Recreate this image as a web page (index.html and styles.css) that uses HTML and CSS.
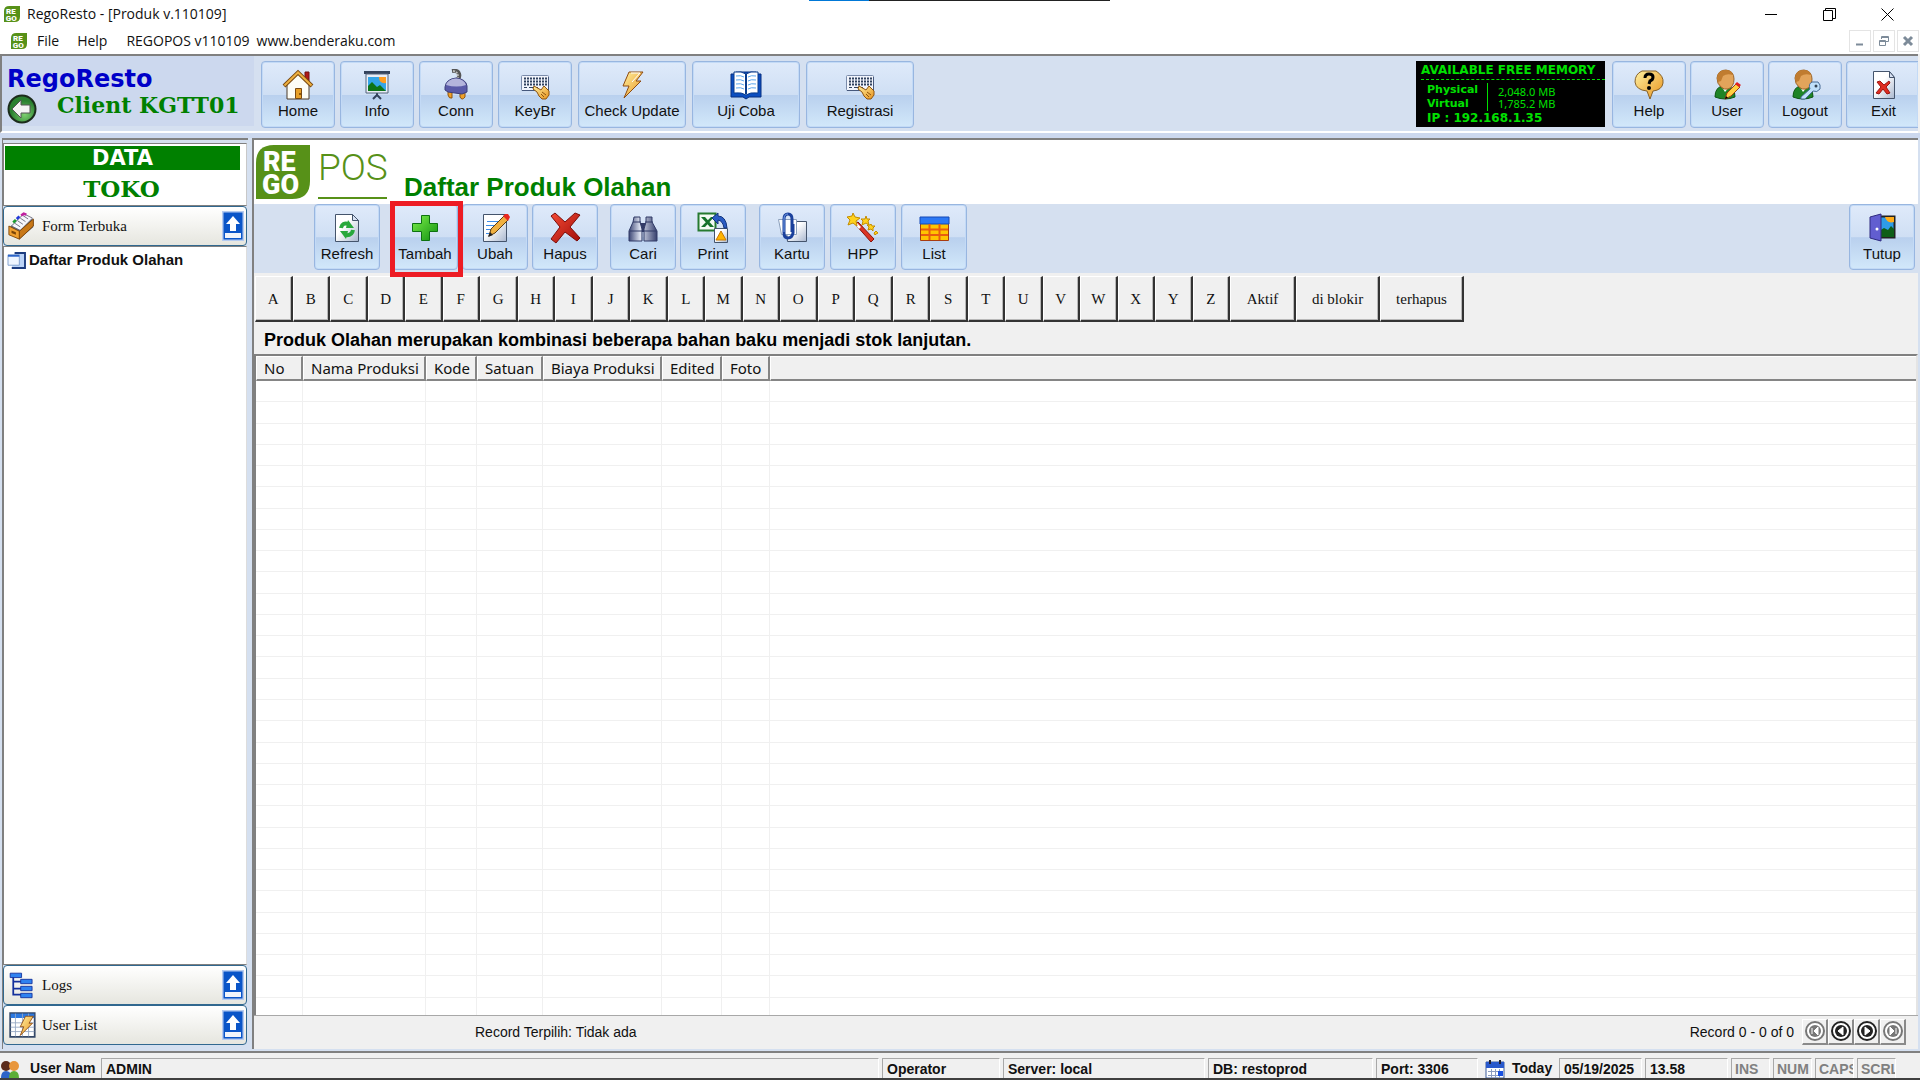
FILE: index.html
```html
<!DOCTYPE html>
<html lang="id">
<head>
<meta charset="utf-8">
<title>RegoResto - [Produk v.110109]</title>
<link rel="stylesheet" href="styles.css">
</head>
<body>
<svg class="defs" aria-hidden="true">
  <defs>
    <linearGradient id="gold" x1="0" y1="0" x2="1" y2="1"><stop offset="0" stop-color="#fff0a0"/><stop offset="1" stop-color="#e8921c"/></linearGradient>
    <linearGradient id="page" x1="0" y1="0" x2="1" y2="1"><stop offset="0.4" stop-color="#fff"/><stop offset="1" stop-color="#a9b7cf"/></linearGradient>
    <linearGradient id="steel" x1="0" x2="1"><stop offset="0" stop-color="#3c4674"/><stop offset="0.4" stop-color="#dfe4f2"/><stop offset="1" stop-color="#36406e"/></linearGradient>
    <linearGradient id="green" x1="0" y1="0" x2="1" y2="1"><stop offset="0" stop-color="#7df04a"/><stop offset="1" stop-color="#109010"/></linearGradient>
    <linearGradient id="red" x1="0" y1="0" x2="1" y2="1"><stop offset="0" stop-color="#f44a34"/><stop offset="1" stop-color="#a00c08"/></linearGradient>
    <radialGradient id="ball" cx="0.6" cy="0.7"><stop offset="0" stop-color="#7ed070"/><stop offset="1" stop-color="#2a8030"/></radialGradient>
    <symbol id="keyboard" viewBox="0 0 32 32">
      <rect x="2.500" y="6.500" width="27" height="15" rx="1" fill="#f2f5fc" stroke="#7b8cab"/>
      <path d="M3 21.500h26M29.500 8v13" stroke="#46587c"/>
      <path d="M5 9.500h23M5 12.500h23M5 15.500h23" stroke="#30425e" stroke-width="2" stroke-dasharray="2 1"/>
      <path d="M5 18.500h3M10 18.500h9" stroke="#30425e"/>
      <path d="M15 17l7 4 3-4 5 5v4l-3 4h-4l-3-3-2-4-4-3z" fill="url(#gold)" stroke="#8e5510"/>
      <path d="M23 23l4 3M22 25l3 3" stroke="#8e5510"/>
    </symbol>
    <symbol id="person" viewBox="0 0 32 32">
      <path d="M4 28q0-10 8-11h4q8 1 8 11-10 4-20 0z" fill="#1e8426" stroke="#0e5614"/>
      <path d="M11 18l3 5 4-5z" fill="#fff"/>
      <path d="M6 9q1-8 9-8 8 1 8 9 0 8-6 10-4 1-7-2-4-3-4-9z" fill="#e2a45b" stroke="#9a6428"/>
      <path d="M6 10q0-9 9-9 6 0 7 5-6-2-10 1l-2 5-3 1z" fill="#c07c30"/>
    </symbol>
    <symbol id="rego" viewBox="0 0 54 54">
      <path d="M0 54V18Q0 0 18 0H54V36Q54 54 36 54Z" fill="#579118"/>
      <text x="7" y="26" class="rego-text">RE</text>
      <text x="6" y="49" class="rego-text">GO</text>
    </symbol>
    <symbol id="upload" viewBox="0 0 22 30">
      <rect x="0.500" y="0.500" width="21" height="29" fill="#0a55c8" stroke="#b5cbf0" stroke-width="2"/>
      <path d="M11 5l7 8h-4v7H8v-7H4z" fill="#fff"/><rect x="3" y="22" width="16" height="5" fill="#f0f4fb"/>
    </symbol>
  </defs>
</svg>

<header class="titlebar">
  <svg class="app-icon"><use href="#rego"/></svg>
  <h1 class="window-title">RegoResto - [Produk v.110109]</h1>
  <div class="progress"><span class="progress-done"></span></div>
  <div class="window-buttons">
    <button aria-label="Minimize"><svg viewBox="0 0 13 13"><path d="M0 6.500h12"/></svg></button>
    <button aria-label="Restore"><svg viewBox="0 0 13 13"><path d="M0.500 2.500h9v10h-9zM2.500 2.500v-2h10v10h-3"/></svg></button>
    <button aria-label="Close"><svg viewBox="0 0 13 13"><path d="M0.500 0.500l12 12M12.500 0.500l-12 12"/></svg></button>
  </div>
</header>

<nav class="menubar">
  <svg class="app-icon"><use href="#rego"/></svg>
  <button>File</button>
  <button>Help</button>
  <span class="version">REGOPOS v110109</span>
  <a href="#">www.benderaku.com</a>
  <div class="mdi-buttons">
    <button aria-label="Minimize document"><svg viewBox="0 0 12 12"><path d="M2 9.500h7" stroke-width="2"/></svg></button>
    <button aria-label="Restore document"><svg viewBox="0 0 12 12"><path d="M1.500 5.500h6v5h-6zM1 6.500h7M3.500 4V1.500h7v5H8M3.500 2.500h7" /></svg></button>
    <button aria-label="Close document"><svg viewBox="0 0 12 12"><path d="M2 2l8 8M10 2l-8 8" stroke-width="3"/></svg></button>
  </div>
</nav>

<section class="topbar">
  <div class="brand">
    <p class="brand-name">RegoResto</p>
    <div class="brand-client">
      <button class="back" aria-label="Kembali"><svg viewBox="0 0 30 30"><circle cx="15" cy="15" r="13.500" fill="url(#ball)" stroke="#1c2c1c" stroke-width="2"/><path d="M5 15l9-9v5h9v8h-9v5z" fill="#f4f4f4" stroke="#555"/></svg></button>
      <span class="client-name">Client KGTT01</span>
    </div>
  </div>
  <div class="top-buttons">
    <button class="tool"><svg viewBox="0 0 32 32"><path d="M23 3h4v12h-4z" fill="#b01818" stroke="#701010"/><path d="M5 16L16 5l11 11v14H5z" fill="#fdfdf6" stroke="#4a3a2a"/><path d="M2 17L16 3.500 30 17" fill="none" stroke="#7a4a10" stroke-width="4"/><path d="M2.500 16.500L16 3.500l13.500 13" fill="none" stroke="#eeb040" stroke-width="2"/><path d="M13.500 19.500h6v10h-6z" fill="#e8a028" stroke="#7a4a10"/><circle cx="18" cy="25" r="1" fill="#704000"/></svg>Home</button>
    <button class="tool"><svg viewBox="0 0 32 32"><path d="M16 24v3m-4 3l4-4 4 4" stroke="#34435c" stroke-width="2" fill="none"/><path d="M3 3.500h26" stroke="#34435c" stroke-width="3"/><path d="M5 5h22v19H5z" fill="#e9edf5" stroke="#55647d"/><path d="M7 8h18v14H7z" fill="#35a5e8"/><path d="M7 22v-5l4-4 5 5 3-2 6 6z" fill="#0d7418"/><path d="M18 8h7v6q-7 1-7-6z" fill="#ff9c20"/></svg>Info</button>
    <button class="tool"><svg viewBox="0 0 32 32"><path d="M12 2q6-1 7 3 1 2-1 5" fill="none" stroke="#555" stroke-width="4"/><path d="M13 2q5 0 5 7" fill="none" stroke="#bbb" stroke-dasharray="2 1" stroke-width="2"/><path d="M8 20v6q1 4 4 3v-8zM20 21v7q2 4 5 0v-8z" fill="#f0a028" stroke="#8e5510"/><path d="M5 18q1-8 11-9 10 1 11 8v6l-5 2-14-2-3-2z" fill="#5a5aa8" stroke="#3d3e7a"/><path d="M6 16q2-6 10-6.500 8 .5 10 6.500-9 3-20 0z" fill="#b4b5dc"/></svg>Conn</button>
    <button class="tool"><svg><use href="#keyboard"/></svg>KeyBr</button>
    <button class="tool tool-wide"><svg viewBox="0 0 32 32"><path d="M13 3h14l-7 9h5L8 29l5-12H7z" fill="url(#gold)" stroke="#8e4a10"/><path d="M15 4h9l-8 9" stroke="#fff" fill="none"/></svg>Check Update</button>
    <button class="tool tool-wide"><svg viewBox="0 0 32 32"><path d="M1 5h5v-2h20v2h5v23H19l-3 2-3-2H1z" fill="#0c4ec0" stroke="#072f80"/><path d="M4 3q8-1 12 2 4-3 12-2v21q-8-1-12 2-4-3-12-2z" fill="#fff" stroke="#0a3c8c"/><path d="M16 5v20" stroke="#0a3c8c" stroke-width="2"/><path d="M6 7q5-1 8 1M6 11q5-1 8 1M6 15q5-1 8 1M6 19q5-1 8 1M26 7q-5-1-8 1M26 11q-5-1-8 1M26 15q-5-1-8 1M26 19q-5-1-8 1" fill="none" stroke="#5aa6ee"/></svg>Uji Coba</button>
    <button class="tool tool-wide"><svg><use href="#keyboard"/></svg>Registrasi</button>
  </div>
  <div class="memory">
    <p class="memory-title">AVAILABLE FREE MEMORY</p>
    <div class="memory-body">
      <div class="memory-labels"><span>Physical</span><span>Virtual</span></div>
      <div class="memory-values"><span>2,048.0 MB</span><span>1,785.2 MB</span></div>
    </div>
    <p class="memory-ip">IP : 192.168.1.35</p>
  </div>
  <div class="session-buttons">
    <button class="tool"><svg viewBox="0 0 32 32"><path d="M9 2h14q8 5 7 12-1 7-10 8l-3 8-3-8Q3 21 2 13 2 5 9 2z" fill="url(#gold)" stroke="#86612a"/><path d="M12 9q0-4 4-4t4 3q0 3-3 4l-1 3" fill="none" stroke="#000" stroke-width="3"/><circle cx="16" cy="19" r="2"/></svg>Help</button>
    <button class="tool"><svg viewBox="0 0 32 32"><use href="#person"/><path d="M14 30l2-6 9-9 4 3-9 9z" fill="#ffd040" stroke="#a04010"/><path d="M24 15l2-2 4 3-2 2z" fill="#e02020"/><path d="M14 30l1-3 2 2z"/></svg>User</button>
    <button class="tool"><svg viewBox="0 0 32 32"><use href="#person"/><path d="M12 28l9-8q-2-5 2-7h6l2 3v4q-3 4-7 2l-8 8h-4z" fill="#bfe0fa" stroke="#486c96"/><circle cx="27" cy="17" r="1.500" fill="#345"/></svg>Logout</button>
    <button class="tool tool-cut"><svg viewBox="0 0 32 32"><path d="M5.500 2.500h16l5 6v21h-21z" fill="url(#page)" stroke="#44546c"/><path d="M21.500 2.500v6h5z" fill="#d8e2f4" stroke="#44546c"/><path d="M9 13l3-1 4 4 5-4 1 2-4 4 4 6-3 1-4-5-4 5-3-1 5-6z" fill="#e02c20" stroke="#9c1410"/></svg>Exit</button>
  </div>
</section>

<div class="workspace">
  <aside class="sidebar">
    <div class="data-card">
      <p class="data-title">DATA</p>
      <p class="data-name">TOKO</p>
    </div>
    <button class="panel-head">
      <svg class="panel-icon" viewBox="0 0 32 32"><path d="M2 17L19 4l10 5v8L13 31z" fill="#5a5f70"/><path d="M4 16L18 2l10 5-14 14z" fill="#f6f6fc" stroke="#667"/><path d="M8 13l6 4M11 10l6 4M14 7l6 4M17 4l6 4" stroke="#667"/><path d="M6 12l3-3" stroke="#1c9c30" stroke-width="3"/><path d="M10 8l3-3" stroke="#2038d8" stroke-width="3"/><path d="M15 4l3-2 3 1" stroke="#c020a0" stroke-width="3" fill="none"/><path d="M1 16l12 6v9L1 26z" fill="#f0a030" stroke="#7a4408"/><path d="M13 22l16-14v8L13 31z" fill="#c87818" stroke="#7a4408"/><path d="M4 21l5 2v3l-5-2z" fill="#7a4408"/></svg>
      <span>Form Terbuka</span>
      <svg class="panel-arrow"><use href="#upload"/></svg>
    </button>
    <ul class="form-list">
      <li><a href="#"><svg viewBox="0 0 20 18"><path d="M8 1h11v16H5" fill="#bcd4f8" stroke="#1c3c80" stroke-width="2"/><path d="M1 3h12v11H1z" fill="#eef5ff" stroke="#7f9fce"/><path d="M1 3h12v2H1z" fill="#2c64c8"/></svg>Daftar Produk Olahan</a></li>
    </ul>
    <button class="panel-head">
      <svg class="panel-icon" viewBox="0 0 32 32"><path d="M6 6v21h9M6 12h9M6 20h9" fill="none" stroke="#14309c" stroke-width="2"/><g fill="#2f82f0" stroke="#14309c"><path d="M2.500 2.500h13v5h-13zM14.500 9.500h13v5h-13zM14.500 17.500h13v5h-13zM14.500 25.500h13v5h-13z"/></g></svg>
      <span>Logs</span>
      <svg class="panel-arrow"><use href="#upload"/></svg>
    </button>
    <button class="panel-head">
      <svg class="panel-icon" viewBox="0 0 32 32"><path d="M2.500 2.500h28v27h-28z" fill="#fff" stroke="#344868" stroke-width="2"/><path d="M3 3h27v5H3z" fill="#2b78e0"/><path d="M3 13.500h27M3 18.500h27M3 23.500h27M8.500 3v26M16.500 3v26M23.500 3v26" stroke="#96a8c4"/><path d="M20 6h9l-5 8h4L14 28l4-10h-4z" fill="url(#gold)" stroke="#8e4a10"/></svg>
      <span>User List</span>
      <svg class="panel-arrow"><use href="#upload"/></svg>
    </button>
  </aside>

  <main class="document">
    <header class="doc-head">
      <svg class="logo"><use href="#rego"/></svg>
      <span class="logo-pos">POS</span>
      <h2>Daftar Produk Olahan</h2>
    </header>

    <div class="toolbar">
      <div class="tool-group">
        <button class="tool tool-small"><svg viewBox="0 0 32 32"><path d="M4.500 2.500h17l6 6v21h-23z" fill="url(#page)" stroke="#44546c"/><path d="M21.500 2.500v6h6z" fill="#d8e2f4" stroke="#44546c"/><path d="M10 16q1-6 8-4M22 18q-1 6-8 5" fill="none" stroke="#28a83c" stroke-width="4"/><path d="M17 8l6 8h-8zM15 27l-6-8h8z" fill="#28a83c"/></svg>Refresh</button>
      </div>
      <div class="tool-group">
        <div class="marked"><button class="tool tool-small"><svg viewBox="0 0 32 32"><path d="M12.500 3.500h8v8h8v8h-8v9h-8v-9h-9v-8h9z" fill="url(#green)" stroke="#0d7210"/></svg>Tambah</button></div>
        <button class="tool tool-small"><svg viewBox="0 0 32 32"><path d="M4.500 2.500h23v27h-23z" fill="url(#page)" stroke="#44546c"/><path d="M8 9.500h13M7 13.500h10M7 17.500h8M7 21.500h5" stroke="#3c8ce8"/><path d="M10 24l2-7L25 4l4 4-13 13z" fill="#f0b040" stroke="#5c3c10"/><path d="M24 4l2-2h3l2 3-2 4z" fill="#e82820"/><path d="M9 25l2-5 3 3z" fill="#222"/></svg>Ubah</button>
        <button class="tool tool-small"><svg viewBox="0 0 32 32"><path d="M2 4l4-3 10 9L26 1l5 2-10 12 10 11-3 3-12-9-9 11-5-4 9-12z" fill="url(#red)" stroke="#7c0c08"/></svg>Hapus</button>
      </div>
      <div class="tool-group">
        <button class="tool tool-small"><svg viewBox="0 0 32 32"><path d="M13 11h6v9h-6z" fill="#333c68"/><path d="M7 5h6v5l2 7v12H2V19l4-9zM19 5h6v5l5 9v10H17V17l2-7z" fill="url(#steel)" stroke="#303a66"/><path d="M6 10h8M18 10h8M3 19h12M17 19h12" stroke="#303a66"/></svg>Cari</button>
        <button class="tool tool-small"><svg viewBox="0 0 32 32"><path d="M1.500 1.500h17v17h-17z" fill="#f4fbf4" stroke="#267a30" stroke-width="2"/><path d="M4 5h4l9 10h-4zM14 5h3L8 15H4z" fill="#16722a"/><path d="M17.500 16.500h13v14h-13z" fill="url(#page)" stroke="#44546c"/><path d="M19 28l5-9 5 9z" fill="#ffb400" stroke="#c87800"/><path d="M15 6l6-5v3q8 0 9 12h-3q-1-7-6-8v4z" fill="#2a5cc4" stroke="#12347c"/></svg>Print</button>
      </div>
      <div class="tool-group tool-group-last">
        <button class="tool tool-small"><svg viewBox="0 0 32 32"><path d="M9.500 9.500h21v20h-19z" fill="url(#page)" stroke="#44546c"/><path d="M2.500 7.500h18v15h-15z" fill="#fff" stroke="#8ca0bc"/><path d="M17 12v9q-1 5-5 5t-4-5V7q0-5 4-5t4 5v13" fill="none" stroke="#1a409c" stroke-width="3"/><path d="M8 20V7q0-5 4-5" fill="none" stroke="#77a0e8"/></svg>Kartu</button>
        <button class="tool tool-small"><svg viewBox="0 0 32 32"><path d="M8 12l3-2 16 17-3 3z" fill="#dc3424" stroke="#86140c"/><path d="M10 11l4 4-2 2-4-5z" fill="#fff"/><g fill="#ffd21e" stroke="#c48c00"><path d="M6 1l2 4 5 1-4 3 1 5-4-3-5 2 2-5-3-3 5-1zM19 4l1 3h3l-2 2 1 4-3-2-4 2 1-4-2-2h4zM24 12l1 2h3l-2 2v3l-2-2-3 1 1-3-2-2h3zM29 19l1 1 1 1-2 1-1 1-1-2 1-1z"/></g></svg>HPP</button>
        <button class="tool tool-small"><svg viewBox="0 0 32 32"><path d="M2.500 5.500h28v23h-28z" fill="#ffc400" stroke="#a83c10"/><path d="M2 5h29v7H2z" fill="#2c78f4" stroke="#1448b4"/><path d="M3 17.500h27M3 23h27M11.500 12v16M21.500 12v16" stroke="#e85c10" stroke-width="2"/></svg>List</button>
      </div>
      <div class="tool-group tool-end">
        <button class="tool tool-small"><svg viewBox="0 0 32 32"><path d="M12.500 4.500h16v21h-16z" fill="#2e9ce8" stroke="#222" stroke-width="2"/><path d="M19 5h9v5q-7 2-9-5z" fill="#ffac18"/><path d="M13 25v-6l5-3 4 2 3-4 3 3v8z" fill="#0e5e18"/><path d="M4 5l11-3v27L4 26z" fill="#625ed0" stroke="#2e2a80"/><circle cx="11" cy="17" r="1.500" fill="#fff"/></svg>Tutup</button>
      </div>
    </div>

    <div class="filter">
      <div class="letters">
        <button>A</button><button>B</button><button>C</button><button>D</button><button>E</button><button>F</button><button>G</button><button>H</button><button>I</button><button>J</button><button>K</button><button>L</button><button>M</button><button>N</button><button>O</button><button>P</button><button>Q</button><button>R</button><button>S</button><button>T</button><button>U</button><button>V</button><button>W</button><button>X</button><button>Y</button><button>Z</button>
      </div>
      <button class="filter-active">Aktif</button>
      <button class="filter-state">di blokir</button>
      <button class="filter-state">terhapus</button>
    </div>

    <p class="note">Produk Olahan merupakan kombinasi beberapa bahan baku menjadi stok lanjutan.</p>

    <div class="grid">
      <table>
        <colgroup><col class="c-no"><col class="c-nama"><col class="c-kode"><col class="c-satuan"><col class="c-biaya"><col class="c-edited"><col class="c-foto"><col></colgroup>
        <thead>
          <tr><th>No</th><th>Nama Produksi</th><th>Kode</th><th>Satuan</th><th>Biaya Produksi</th><th>Edited</th><th>Foto</th><th></th></tr>
        </thead>
        <tbody>
          <tr><td></td><td></td><td></td><td></td><td></td><td></td><td></td><td></td></tr>
          <tr><td></td><td></td><td></td><td></td><td></td><td></td><td></td><td></td></tr>
          <tr><td></td><td></td><td></td><td></td><td></td><td></td><td></td><td></td></tr>
          <tr><td></td><td></td><td></td><td></td><td></td><td></td><td></td><td></td></tr>
          <tr><td></td><td></td><td></td><td></td><td></td><td></td><td></td><td></td></tr>
          <tr><td></td><td></td><td></td><td></td><td></td><td></td><td></td><td></td></tr>
          <tr><td></td><td></td><td></td><td></td><td></td><td></td><td></td><td></td></tr>
          <tr><td></td><td></td><td></td><td></td><td></td><td></td><td></td><td></td></tr>
          <tr><td></td><td></td><td></td><td></td><td></td><td></td><td></td><td></td></tr>
          <tr><td></td><td></td><td></td><td></td><td></td><td></td><td></td><td></td></tr>
          <tr><td></td><td></td><td></td><td></td><td></td><td></td><td></td><td></td></tr>
          <tr><td></td><td></td><td></td><td></td><td></td><td></td><td></td><td></td></tr>
          <tr><td></td><td></td><td></td><td></td><td></td><td></td><td></td><td></td></tr>
          <tr><td></td><td></td><td></td><td></td><td></td><td></td><td></td><td></td></tr>
          <tr><td></td><td></td><td></td><td></td><td></td><td></td><td></td><td></td></tr>
          <tr><td></td><td></td><td></td><td></td><td></td><td></td><td></td><td></td></tr>
          <tr><td></td><td></td><td></td><td></td><td></td><td></td><td></td><td></td></tr>
          <tr><td></td><td></td><td></td><td></td><td></td><td></td><td></td><td></td></tr>
          <tr><td></td><td></td><td></td><td></td><td></td><td></td><td></td><td></td></tr>
          <tr><td></td><td></td><td></td><td></td><td></td><td></td><td></td><td></td></tr>
          <tr><td></td><td></td><td></td><td></td><td></td><td></td><td></td><td></td></tr>
          <tr><td></td><td></td><td></td><td></td><td></td><td></td><td></td><td></td></tr>
          <tr><td></td><td></td><td></td><td></td><td></td><td></td><td></td><td></td></tr>
          <tr><td></td><td></td><td></td><td></td><td></td><td></td><td></td><td></td></tr>
          <tr><td></td><td></td><td></td><td></td><td></td><td></td><td></td><td></td></tr>
          <tr><td></td><td></td><td></td><td></td><td></td><td></td><td></td><td></td></tr>
          <tr><td></td><td></td><td></td><td></td><td></td><td></td><td></td><td></td></tr>
          <tr><td></td><td></td><td></td><td></td><td></td><td></td><td></td><td></td></tr>
          <tr><td></td><td></td><td></td><td></td><td></td><td></td><td></td><td></td></tr>
          <tr class="row-last"><td></td><td></td><td></td><td></td><td></td><td></td><td></td><td></td></tr>
        </tbody>
      </table>
    </div>

    <footer class="record-bar">
      <span class="selected-record">Record Terpilih: Tidak ada</span>
      <span class="record-count">Record 0 - 0 of 0</span>
      <div class="pager">
        <button disabled aria-label="First record"><svg viewBox="0 0 22 22"><circle cx="11" cy="11" r="9"/><circle class="dot" cx="11" cy="11" r="6"/><path d="M8 8v6M14 7v8l-4-4z"/></svg></button>
        <button aria-label="Previous record"><svg viewBox="0 0 22 22"><circle cx="11" cy="11" r="9"/><circle class="dot" cx="11" cy="11" r="6"/><path d="M13 7v8l-5-4z"/></svg></button>
        <button aria-label="Next record"><svg viewBox="0 0 22 22"><circle cx="11" cy="11" r="9"/><circle class="dot" cx="11" cy="11" r="6"/><path d="M9 7v8l5-4z"/></svg></button>
        <button disabled aria-label="Last record"><svg viewBox="0 0 22 22"><circle cx="11" cy="11" r="9"/><circle class="dot" cx="11" cy="11" r="6"/><path d="M14 8v6M8 7v8l4-4z"/></svg></button>
      </div>
    </footer>
  </main>
</div>

<footer class="statusbar">
  <svg class="status-icon" viewBox="0 0 20 18"><path d="M1 18q0-7 5-7t6 7z" fill="#2d64c8"/><circle cx="6" cy="6" r="5" fill="#5c2c1c"/><path d="M9 18q0-7 5-7t5 7z" fill="#5cae38"/><circle cx="14" cy="6" r="5" fill="#e8963c"/></svg>
  <span class="status-label s-user">User Nam</span>
  <span class="cell s-admin">ADMIN</span>
  <span class="cell s-operator">Operator</span>
  <span class="cell s-server">Server: local</span>
  <span class="cell s-db">DB: restoprod</span>
  <span class="cell s-port">Port: 3306</span>
  <svg class="status-icon" viewBox="0 0 20 18"><path d="M1 2h18v16H1z" fill="#fff" stroke="#3c5c9c"/><path d="M1 2h18v6H1z" fill="#2858cc"/><path d="M5 0v4M15 0v4" stroke="#223" stroke-width="2"/><path d="M3 11.500h15M3 15.500h15M6.500 9v9M10.500 9v9M14.500 9v9" stroke="#8a9cc0"/><path d="M13 11h5v5h-5z" fill="#1850e0"/></svg>
  <span class="status-label s-today">Today</span>
  <span class="cell s-date">05/19/2025</span>
  <span class="cell s-date">13.58</span>
  <span class="cell s-key">INS</span>
  <span class="cell s-key">NUM</span>
  <span class="cell s-key">CAPS</span>
  <span class="cell s-key">SCRL</span>
</footer>
</body>
</html>
```
FILE: styles.css
```css
* { box-sizing: border-box; }

body {
  margin: 0;
  height: 100vh;
  display: flex;
  flex-direction: column;
  overflow: hidden;
  background: #f0f0f0;
  color: #111;
  font-family: "Liberation Sans", sans-serif;
  font-size: 15px;
}

p, h1, h2, ul { margin: 0; padding: 0; }
button { margin: 0; padding: 0; border: 0; background: none; color: inherit; font: inherit; white-space: nowrap; }
a { color: inherit; text-decoration: none; }
svg { display: block; flex: none; }

.defs { position: absolute; width: 0; height: 0; }
.rego-text { font-family: "Roboto", sans-serif; font-size: 27px; font-weight: 900; fill: #fff; }

/* Title bar */
.titlebar {
  position: relative;
  display: flex;
  align-items: center;
  gap: 7px;
  height: 28px;
  padding-left: 4px;
  background: #fff;
}
.app-icon { width: 16px; height: 16px; }
.window-title { font: 400 14px/28px "Open Sans", sans-serif; }
.progress { position: absolute; top: 0; left: 809px; width: 301px; height: 1px; background: #222; }
.progress-done { display: block; width: 60px; height: 1px; background: #0078d7; }
.window-buttons { display: flex; margin-left: auto; padding-right: 4px; }
.window-buttons button { display: grid; place-items: center; width: 58px; height: 28px; }
.window-buttons svg { width: 13px; height: 13px; fill: none; stroke: #000; }

/* Menu bar */
.menubar {
  display: flex;
  align-items: center;
  height: 26px;
  padding: 0 1px 0 11px;
  background: #fff;
  font: 14px/24px "Open Sans", sans-serif;
}
.menubar > button { margin-left: 10px; margin-right: 8px; }
.menubar .version { margin: 0 7px 0 11px; }
.mdi-buttons { display: flex; gap: 2px; margin-left: auto; }
.mdi-buttons button { display: grid; place-items: center; width: 22px; height: 22px; border: 1px solid #e4e4e4; }
.mdi-buttons svg { width: 12px; height: 12px; fill: none; stroke: #7d8b99; }

/* Main button bar */
.topbar {
  display: flex;
  align-items: flex-start;
  height: 79px;
  margin-right: 2px;
  padding-top: 5px;
  border: solid #808080;
  border-width: 2px 0 0 2px;
  border-bottom: 2px solid #fff;
  background: #d5e0f0;
}
.brand { width: 252px; height: 70px; margin-top: -5px; padding: 10px 0 0 5px; background: #ccd8ee; }
.brand-name { color: #0000c8; font: 700 24px/26px "DejaVu Sans", sans-serif; }
.brand-client { display: flex; align-items: center; gap: 20px; }
.brand-client .back { margin-top: 2px; }
.back svg { width: 30px; height: 30px; }
.client-name { padding-bottom: 6px; color: #008000; font: 700 22px/24px "DejaVu Serif", serif; white-space: nowrap; }
.top-buttons { display: flex; gap: 5px; margin-left: 7px; }
.session-buttons { display: flex; gap: 4px; margin-left: 7px; }

.tool {
  display: flex;
  flex-direction: column;
  align-items: center;
  width: 74px;
  height: 67px;
  padding-top: 7px;
  border: 1px solid #98b6e0;
  border-radius: 4px;
  background: linear-gradient(#dfeafa, #cfdff4 50%, #b9d0ee 51%, #d2e8fa);
  box-shadow: inset 0 0 0 1px #c3daf6;
  line-height: 20px;
}
.tool svg { width: 32px; height: 32px; }
.tool-wide { width: 108px; margin-left: 1px; }
.tool-small { width: 66px; height: 66px; }
.tool-cut { width: 72px; padding-left: 2px; border-right: 0; border-radius: 4px 0 0 4px; }

.memory {
  width: 189px;
  height: 66px;
  margin-left: auto;
  padding: 2px 0 0 5px;
  background: #000;
  color: #00e000;
  font: 700 12px/14px "DejaVu Sans", sans-serif;
  white-space: nowrap;
}
.memory-title { padding-bottom: 2px; border-bottom: 1px dashed #00e000; font-size: 12px; }
.memory-body { display: flex; gap: 10px; padding: 3px 0 0 6px; font-size: 11px; }
.memory-labels { display: flex; flex-direction: column; width: 61px; border-right: 1px solid #00e000; }
.memory-values { display: flex; flex-direction: column; padding-top: 3px; font-weight: 400; font-family: "Noto Sans", sans-serif; line-height: 12px; }
.memory-ip { padding-left: 6px; }

/* Workspace */
.workspace { flex: 1; min-height: 0; display: flex; gap: 4px; padding: 5px 2px 2px 2px; background: linear-gradient(#ccd8ee, #ccd8ee) top / 100% 5px no-repeat, #d5e0f0; }

.sidebar { display: flex; flex-direction: column; width: 246px; padding: 3px 1px 4px 0; border: solid #808080; border-width: 2px 0 0 1px; }
.data-card { height: 63px; padding: 2px 6px 0 1px; border: 1px solid #808080; border-right-color: #c8c8c8; background: #fff; text-align: center; }
.data-title { width: 235px; background: #008000; color: #fff; font: 700 21px/24px "DejaVu Sans", sans-serif; }
.data-name { padding-right: 2px; color: #008000; font: 700 23px/38px "DejaVu Serif", serif; }

.panel-head {
  display: flex;
  align-items: center;
  gap: 6px;
  height: 40px;
  padding: 0 2px 0 4px;
  border: 1px solid #31688f;
  border-radius: 4px;
  background: linear-gradient(#fff, #e6e6df);
  font: 15px/20px "Liberation Serif", serif;
  text-align: left;
}
.panel-head span { flex: 1; }
.panel-icon { width: 28px; height: 28px; }
.panel-arrow { width: 22px; height: 30px; }

.form-list { flex: 1; padding: 3px 3px; border: 1px solid #808080; border-right-color: #ddd; background: #fff; list-style: none; }
.form-list a { display: flex; align-items: center; gap: 3px; font-weight: 700; line-height: 20px; }
.form-list svg { width: 19px; height: 17px; }

.document { flex: 1; min-width: 0; display: flex; flex-direction: column; border: solid #808080; border-width: 2px 0 0 2px; background: #f0f0f0; }
.doc-head { display: flex; align-items: flex-start; height: 64px; padding: 5px 0 0 2px; background: #fff; }
.logo { width: 54px; height: 54px; }
.logo-pos { width: 69px; height: 54px; margin: 0 17px 0 8px; border-bottom: 2px solid #579118; color: #579118; font: 300 37px/46px "Roboto", sans-serif; text-align: center; }
.doc-head h2 { padding-top: 26px; color: #008000; font-size: 26px; line-height: 32px; }

.toolbar { display: flex; gap: 12px; height: 69px; padding: 0 3px 0 60px; background: #d5e0f0; }
.tool-group { display: flex; gap: 4px; }
.tool-group-last { gap: 5px; margin-left: 1px; }
.tool-end { margin-left: auto; }
.marked { position: relative; }
.marked::after { content: ""; position: absolute; inset: -3px -5px -4px -2px; border: 5px solid #ed1c24; pointer-events: none; }

.filter { display: flex; height: 49px; padding: 3px 0 0 1px; font: 15px/18px "Liberation Serif", serif; }
.letters { display: grid; grid-template-columns: repeat(26, 1fr); width: 975px; }
.filter button { border: solid; border-width: 1px 2px 2px 1px; border-color: #fff #333 #333 #fff; box-shadow: inset -1px -1px 0 #b8b8b8; }
.filter-active { width: 66px; }
.filter-state { width: 84px; }

.note { padding: 8px 10px 3px; color: #000; font-size: 18px; font-weight: 700; line-height: 21px; }

.grid { flex: 1; min-height: 0; border: solid #808080; border-width: 2px 0 0 2px; border-right: 2px solid #e4e4e4; background: #fff; overflow: hidden; }
.grid table { width: 100%; height: 100%; border-collapse: separate; border-spacing: 0; table-layout: fixed; }
.grid th { height: 25px; padding: 0 7px; border: solid; border-width: 1px 2px 2px 1px; border-color: #fff #858585 #858585 #fff; background: #f0f0f0; font: 15px/20px "Noto Sans", sans-serif; text-align: left; white-space: nowrap; }
.grid th:last-child { border-right: 0; }
.grid td { height: 21px; padding: 0; border: solid #f0f0f0; border-width: 0 1px 1px 0; }
.grid td:last-child { border-right: 0; }
.row-last td { height: 17px; border-bottom: 0; }
.c-no { width: 47px; }
.c-nama { width: 123px; }
.c-kode { width: 51px; }
.c-satuan { width: 66px; }
.c-biaya { width: 119px; }
.c-edited { width: 60px; }
.c-foto { width: 48px; }

.record-bar { display: flex; align-items: center; height: 34px; padding: 0 12px 2px 221px; border-top: 1px solid #a8a8a8; font-size: 14px; }
.record-count { margin-left: auto; margin-right: 8px; }
.pager { display: flex; }
.pager button { display: grid; place-items: center; width: 26px; height: 26px; border: solid; border-width: 1px 2px 2px 1px; border-color: #fff #8a8a8a #8a8a8a #fff; color: #222; }
.pager button:disabled { color: #777; }
.pager svg { width: 22px; height: 22px; fill: #fff; stroke: currentColor; }
.pager circle { stroke-width: 2; }
.pager .dot { fill: currentColor; stroke: none; }
.pager path { stroke: #fff; }

/* Status bar */
.statusbar { display: flex; align-items: flex-end; gap: 3px; height: 29px; padding: 0 24px 0 0; border-top: 2px solid #808080; border-bottom: 2px solid #404040; font-size: 14px; font-weight: 700; line-height: 20px; }
.status-icon { width: 20px; height: 18px; }
.status-label { overflow: hidden; white-space: nowrap; line-height: 19px; }
.cell { height: 20px; padding-left: 4px; border: solid #a8a8a8; border-width: 1px 0 0 1px; border-right: 1px solid #fff; overflow: hidden; white-space: nowrap; line-height: 21px; }
.s-user { width: 75px; padding-left: 7px; }
.s-admin { flex: 1; }
.s-operator { width: 118px; }
.s-server { width: 202px; }
.s-db { width: 165px; }
.s-port { width: 102px; margin-right: 4px; }
.s-today { width: 48px; padding-left: 4px; }
.s-date { width: 83px; }
.s-key { width: 39px; padding-left: 3px; color: #808080; }
```
